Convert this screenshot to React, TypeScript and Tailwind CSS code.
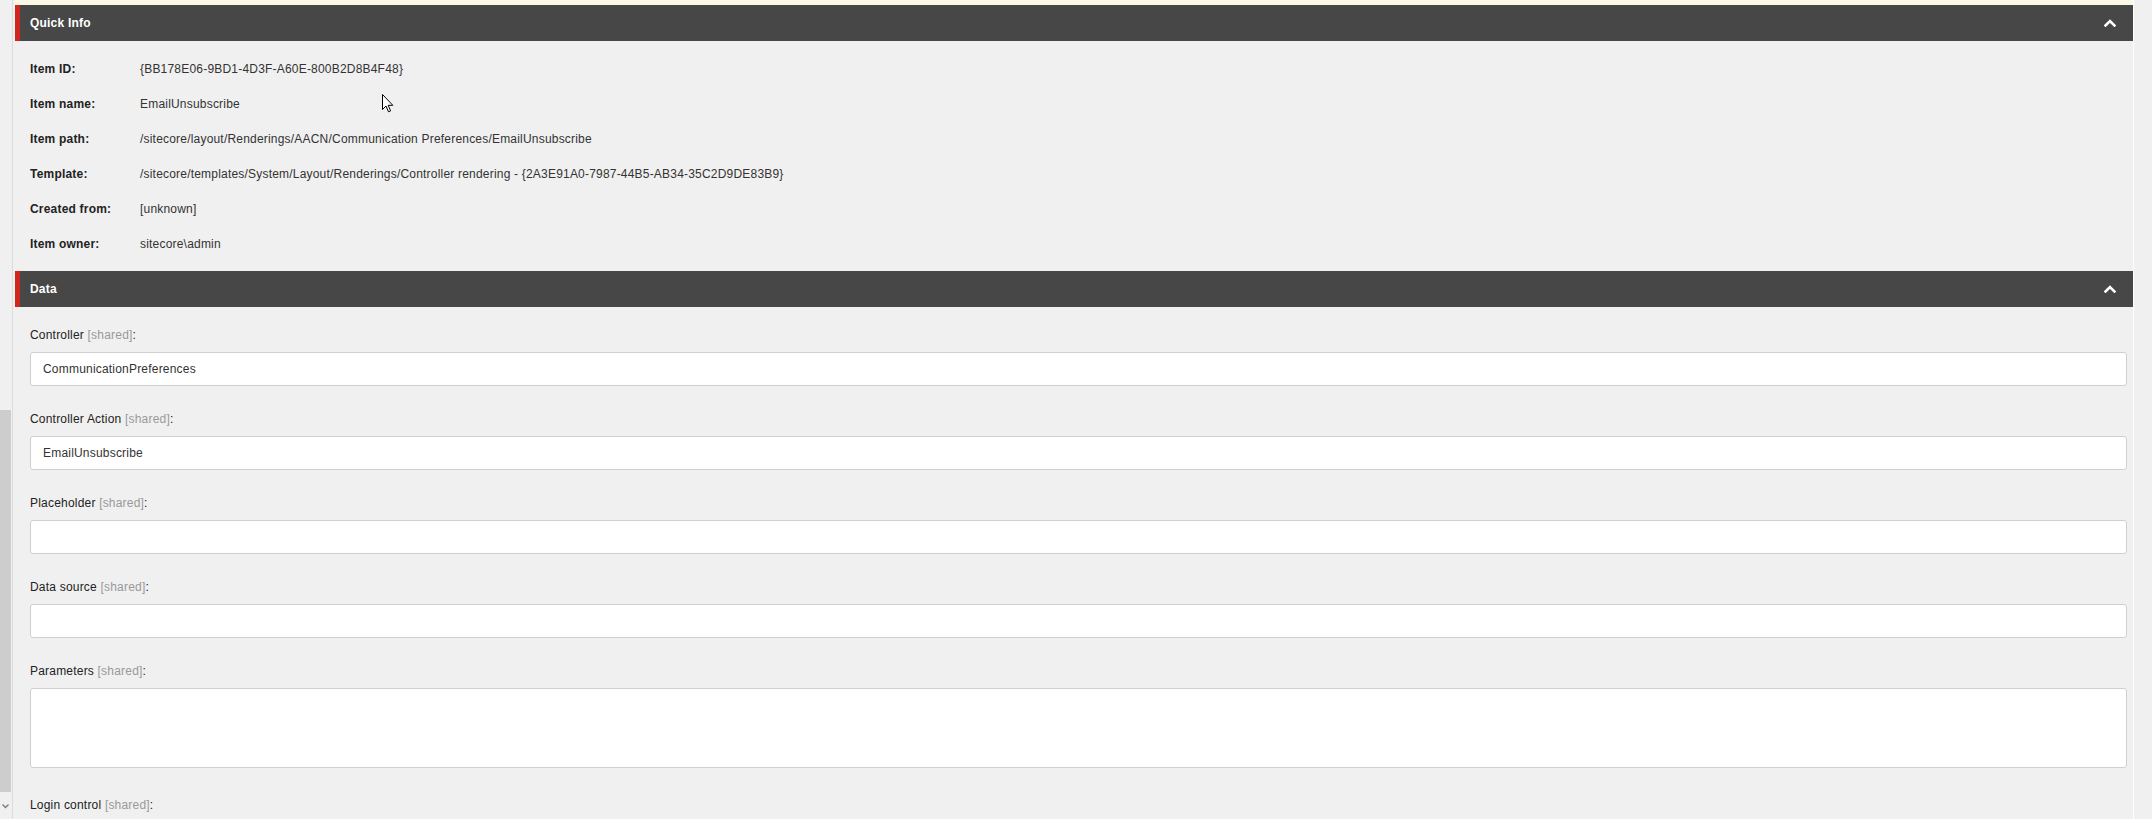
import React from "react";

const quickInfo = [
  { label: "Item ID:", value: "{BB178E06-9BD1-4D3F-A60E-800B2D8B4F48}" },
  { label: "Item name:", value: "EmailUnsubscribe" },
  { label: "Item path:", value: "/sitecore/layout/Renderings/AACN/Communication Preferences/EmailUnsubscribe" },
  { label: "Template:", value: "/sitecore/templates/System/Layout/Renderings/Controller rendering - {2A3E91A0-7987-44B5-AB34-35C2D9DE83B9}" },
  { label: "Created from:", value: "[unknown]" },
  { label: "Item owner:", value: "sitecore\\admin" },
];

const fields = [
  { label: "Controller", value: "CommunicationPreferences" },
  { label: "Controller Action", value: "EmailUnsubscribe" },
  { label: "Placeholder", value: "" },
  { label: "Data source", value: "" },
];

function Chevron() {
  return (
    <svg width="12" height="8" viewBox="0 0 12 8">
      <polyline points="1.5,6.5 6,2 10.5,6.5" fill="none" stroke="#fff" strokeWidth="2.6" strokeLinecap="square" />
    </svg>
  );
}

function SectionHeader({ title }: { title: string }) {
  return (
    <div className="h-[36px] shrink-0 flex items-center justify-between bg-[#474747] border-l-[5px] border-[#d1261d] pl-[10px] pr-[17px]">
      <span className="text-white font-bold text-[12px]">{title}</span>
      <Chevron />
    </div>
  );
}

function FieldLabel({ label }: { label: string }) {
  return (
    <div className="h-4 leading-4 mb-[9px] text-[#222]">
      {label} <span className="text-[#999]">[shared]</span>:
    </div>
  );
}

export default function App() {
  return (
    <div
      className="relative w-full h-[819px] overflow-hidden flex bg-[#f0f0f0] text-[12px] tracking-[0.2px]"
      style={{ fontFamily: '"Liberation Sans", Arial, sans-serif' }}
    >
      {/* left scrollbar */}
      <div className="w-[12px] flex flex-col bg-[#f0f0f0] shrink-0">
        <div className="h-[410px]" />
        <div className="h-[382px] w-[11px] bg-[#cdcdcd]" />
        <div className="flex-1 flex items-center pl-[2px] pt-[2px]">
          <svg width="7" height="5" viewBox="0 0 7 5">
            <polyline points="0.5,0.5 3.5,3.5 6.5,0.5" fill="none" stroke="#7a7a7a" strokeWidth="1.3" />
          </svg>
        </div>
      </div>
      <div className="w-px bg-[#dcdcdc] shrink-0" />
      <div className="w-[2px] shrink-0" />

      {/* content */}
      <div className="flex-1 flex flex-col min-w-0">
        <div className="h-[5px] shrink-0 bg-[#fdf8e5]" />
        <SectionHeader title="Quick Info" />
        <div className="py-[10px] pl-[15px]">
          {quickInfo.map(({ label, value }) => (
            <div key={label} className="h-[35px] flex items-center">
              <span className="w-[110px] shrink-0 font-bold text-[#222]">{label}</span>
              <span className="text-[#333] whitespace-nowrap">{value}</span>
            </div>
          ))}
        </div>
        <SectionHeader title="Data" />
        <div className="pt-[20px] pl-[15px] pr-[6px]">
          {fields.map(({ label, value }) => (
            <div key={label} className="mb-[25px]">
              <FieldLabel label={label} />
              <div className="h-[34px] flex items-center bg-white border border-[#cfcfcf] rounded-[3px] pl-[12px] text-[#333]">
                {value}
              </div>
            </div>
          ))}
          <div className="mb-[29px]">
            <FieldLabel label="Parameters" />
            <div className="h-[80px] bg-white border border-[#cfcfcf] rounded-[3px]" />
          </div>
          <FieldLabel label="Login control" />
        </div>
      </div>

      {/* right strip */}
      <div className="w-[19px] shrink-0 border-l border-white bg-[#f0f0f0]" />

      {/* mouse pointer */}
      <svg className="absolute left-[382px] top-[94px]" width="12" height="19" viewBox="0 0 12 19">
        <path d="M0.5 0.5 L0.5 15.5 L4 12 L6.5 17.8 L8.6 16.9 L6.2 11.3 L10.8 11.3 Z" fill="#fff" stroke="#000" strokeWidth="1" strokeLinejoin="miter" />
      </svg>
    </div>
  );
}
